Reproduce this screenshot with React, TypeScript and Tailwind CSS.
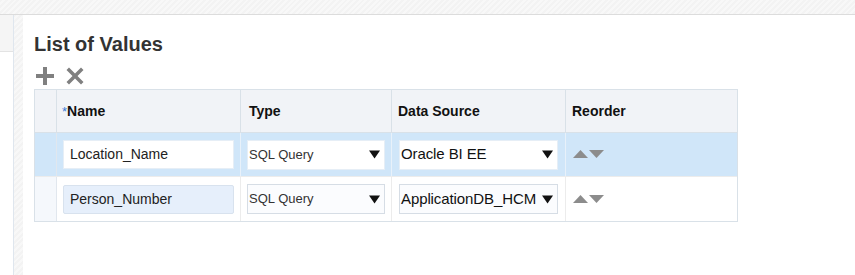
import React from 'react';

// ── List of Values editor ─────────────────────────────────────────────────────
// Static recreation of the data-model "List of Values" grid: a toolbar with
// add / delete, then a table with name, type, data source and reorder cells.

const hatch =
  'bg-[repeating-linear-gradient(135deg,#f3f3f3_0px,#f3f3f3_2px,#f8f8f8_2px,#f8f8f8_4px)]';

const FONT = { fontFamily: '"Liberation Sans", Arial, sans-serif' };

interface Row {
  name: string;
  type: string;
  source: string;
  selected?: boolean;
}

const rows: Row[] = [
  { name: 'Location_Name', type: 'SQL Query', source: 'Oracle BI EE', selected: true },
  { name: 'Person_Number', type: 'SQL Query', source: 'ApplicationDB_HCM' },
];

const Caret = () => (
  <svg width="11" height="9" viewBox="0 0 11 9" className="shrink-0">
    <path d="M0 0.5h11L5.5 8.5z" fill="#111" />
  </svg>
);

const Reorder = () => (
  <div className="flex items-center gap-[1px]">
    <svg width="15" height="8" viewBox="0 0 15 8">
      <path d="M0 8L7.5 0L15 8z" fill="#8c8c8c" />
    </svg>
    <svg width="15" height="8" viewBox="0 0 15 8">
      <path d="M0 0h15L7.5 8z" fill="#8c8c8c" />
    </svg>
  </div>
);

const cols = 'grid grid-cols-[22px_184px_151px_174px_172px]';

export default function App() {
  return (
    <div className="w-[855px] h-[275px] flex flex-col bg-white overflow-hidden" style={FONT}>
      <div className={`h-[15px] shrink-0 border-b border-[#dcdcdc] ${hatch}`} />
      <div className="flex flex-1 min-h-0">
        {/* left collapsed panel */}
        <div className="w-[14px] shrink-0 flex flex-col border-r border-[#dfe6ee]">
          <div className="h-[37px] bg-[#f5f5f5] border-b border-[#e3e3e3]" />
          <div className="flex-1 bg-white" />
        </div>
        <div className={`w-[9px] shrink-0 ${hatch}`} />
        {/* main panel */}
        <div className="flex-1 bg-white pl-[11px] pt-[18px]">
          <h1 className="text-[20px] leading-[23px] font-bold text-[#333]">List of Values</h1>
          <div className="flex items-center gap-[12px] mt-[10px] pl-[2px] h-[20px]">
            <svg width="18" height="18" viewBox="0 0 18 18">
              <path d="M7 0h4v7h7v4h-7v7H7v-7H0V7h7z" fill="#808080" />
            </svg>
            <svg width="18" height="18" viewBox="0 0 18 18">
              <path d="M3 0.5L9 6.5L15 0.5L17.5 3L11.5 9L17.5 15L15 17.5L9 11.5L3 17.5L0.5 15L6.5 9L0.5 3z" fill="#808080" />
            </svg>
          </div>
          <div className="mt-[3px] w-[704px] border border-[#d9e1e8]">
            <div className={`${cols} h-[43px] bg-[#f1f3f7] border-b border-[#d9e1e8] text-[14px] font-bold text-[#111]`}>
              <div className="border-r border-[#d9e1e8]" />
              <div className="border-r border-[#d9e1e8] flex items-center pl-[5px]">
                <span className="text-[#3a7bd5] font-normal text-[13px] leading-none self-start mt-[15px]">*</span>Name
              </div>
              <div className="border-r border-[#d9e1e8] flex items-center pl-[8px]">Type</div>
              <div className="border-r border-[#d9e1e8] flex items-center pl-[6px]">Data Source</div>
              <div className="flex items-center pl-[6px]">Reorder</div>
            </div>
            {rows.map((r, i) => (
              <div
                key={r.name}
                className={`${cols} h-[44px] ${i === 0 ? 'border-b border-[#ececec]' : ''} ${
                  r.selected ? 'bg-[#d0e6f9]' : 'bg-white'
                }`}
              >
                <div className={`border-r border-[#e1e7ee] ${r.selected ? '' : 'bg-[#f5f8fc]'}`} />
                <div className={`flex items-center pl-[6px] border-r ${r.selected ? 'border-[#e8f1fa]' : 'border-[#ececec]'}`}>
                  <div
                    className={`w-[171px] h-[29px] border flex items-center pl-[6px] text-[14px] text-[#222] ${
                      r.selected ? 'bg-white border-[#e6eef6]' : 'bg-[#e6effb] border-[#d8e2ee] rounded-[2px]'
                    }`}
                  >
                    {r.name}
                  </div>
                </div>
                <div className={`flex items-center pl-[6px] border-r ${r.selected ? 'border-[#e8f1fa]' : 'border-[#ececec]'}`}>
                  <div
                    className={`w-[138px] h-[30px] border flex items-center justify-between pl-[1px] pr-[4px] text-[13px] text-[#333] ${
                      r.selected ? 'bg-white border-[#e6eef6]' : 'bg-[#fbfcfe] border-[#d6dde5]'
                    }`}
                  >
                    <span>{r.type}</span>
                    <Caret />
                  </div>
                </div>
                <div className={`flex items-center pl-[7px] border-r ${r.selected ? 'border-[#e8f1fa]' : 'border-[#ececec]'}`}>
                  <div
                    className={`w-[159px] h-[30px] border flex items-center justify-between pl-[1px] pr-[4px] text-[15px] text-[#111] ${
                      r.selected ? 'bg-white border-[#e6eef6]' : 'bg-[#fbfcfe] border-[#d6dde5]'
                    }`}
                  >
                    <span className="whitespace-nowrap tracking-[-0.1px]">{r.source}</span>
                    <Caret />
                  </div>
                </div>
                <div className="flex items-center pl-[7px] pb-[1px]">
                  <Reorder />
                </div>
              </div>
            ))}
          </div>
        </div>
      </div>
    </div>
  );
}
